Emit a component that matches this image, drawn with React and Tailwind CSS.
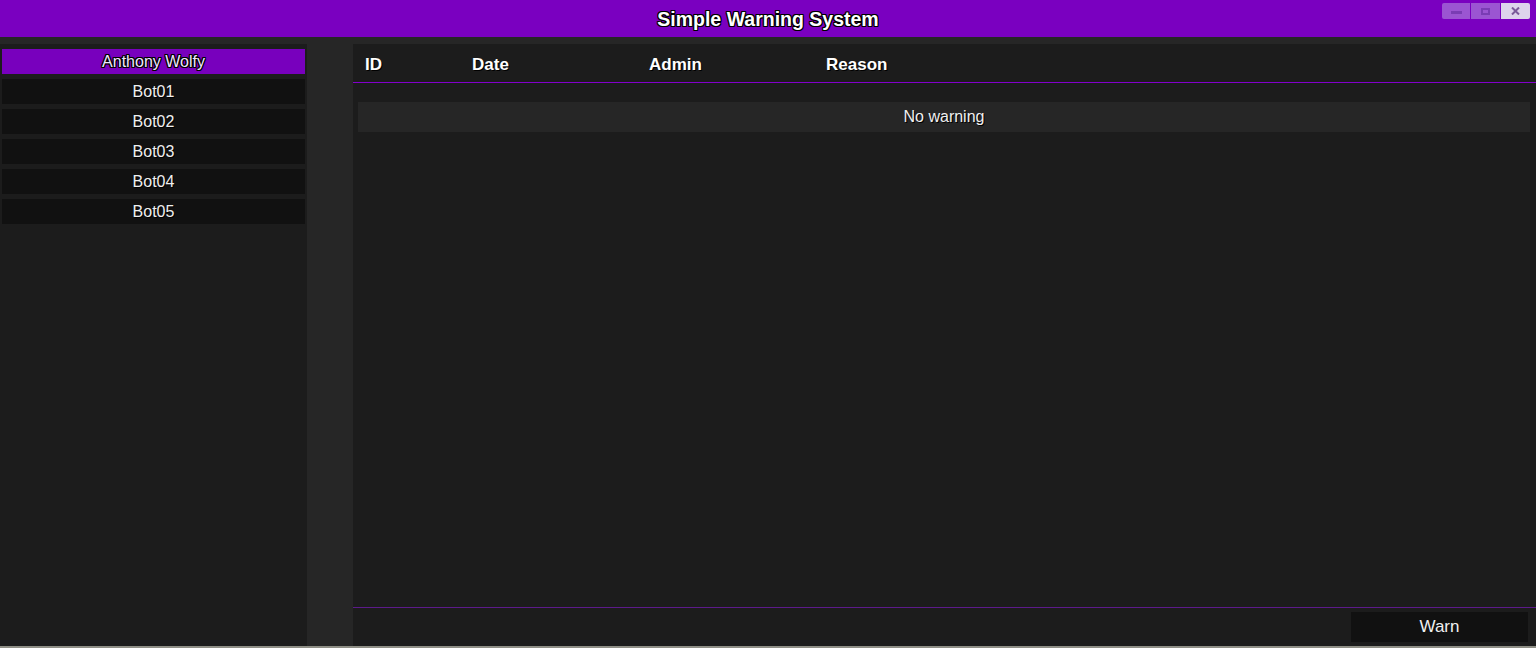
import React from 'react';

const players = ['Anthony Wolfy', 'Bot01', 'Bot02', 'Bot03', 'Bot04', 'Bot05'];

const outline = '[text-shadow:-1px_0_#000,1px_0_#000,0_-1px_#000,0_1px_#000,1px_1px_#000,-1px_-1px_#000,1px_-1px_#000,-1px_1px_#000]';

const App = () => {
  const selected = 0;

  return (
    <div className="w-[1536px] h-[648px] bg-[#262626] flex flex-col overflow-hidden font-['Liberation_Sans',Arial,sans-serif] text-white">
      {/* Barra de título */}
      <div className="relative h-[37px] bg-[#7a00c0] flex items-center justify-center shrink-0">
        <span className={`text-[19.5px] font-bold leading-none mt-[2px] ${outline}`}>Simple Warning System</span>
        <div className="absolute right-[6px] top-[3px] flex gap-px">
          <button className="w-[28px] h-[16px] bg-[#9b55d2] rounded-l-[2px] flex items-center justify-center">
            <span className="block w-[11px] h-[3px] bg-[#7a3cb4] mt-[3px]"></span>
          </button>
          <button className="w-[29px] h-[16px] bg-[#9b55d2] flex items-center justify-center">
            <span className="block w-[9px] h-[7px] border-2 border-[#7a3cb4]"></span>
          </button>
          <button className="w-[29px] h-[16px] bg-[#ddd3ec] rounded-r-[2px] flex items-center justify-center">
            <svg width="9" height="8" viewBox="0 0 9 8">
              <path d="M1 0.5 L8 7.5 M8 0.5 L1 7.5" stroke="#7a5a9a" strokeWidth="2" />
            </svg>
          </button>
        </div>
      </div>

      <div className="flex flex-1 mt-[7px] min-h-0">
        {/* Lista de jogadores */}
        <div className="w-[307px] bg-[#1c1c1c] flex flex-col gap-[5px] pt-[5px] px-[2px] shrink-0">
          {players.map((name, i) => (
            <div
              key={name}
              className={`h-[25px] flex items-center justify-center text-[16px] ${
                i === selected ? `bg-[#7800bd] text-[#f1e6ff] ${outline}` : 'bg-[#111111] text-[#f0f0f0] [text-shadow:1px_1px_#000]'
              }`}
            >
              {name}
            </div>
          ))}
        </div>

        <div className="w-[46px] shrink-0"></div>

        {/* Painel de avisos */}
        <div className="flex-1 bg-[#1c1c1c] flex flex-col">
          <div className="h-[39px] border-b border-[#8300cc] flex items-center pt-[3px] text-[17px] font-bold [text-shadow:1px_1px_#000] shrink-0">
            <span className="pl-[12px] w-[119px]">ID</span>
            <span className="w-[177px]">Date</span>
            <span className="w-[177px]">Admin</span>
            <span>Reason</span>
          </div>
          <div className="flex-1 pt-[19px] pl-[5px] pr-[6px]">
            <div className="h-[30px] bg-[#262626] flex items-center justify-center text-[16px] text-[#f0f0f0] [text-shadow:1px_1px_#000]">
              No warning
            </div>
          </div>
          <div className="h-[39px] border-t border-[#5c1a8a] flex justify-end items-start pt-[4px] pr-[8px] shrink-0">
            <button className="w-[177px] h-[30px] bg-[#111111] text-[17px] text-[#f0f0f0] flex items-center justify-center">
              Warn
            </button>
          </div>
        </div>
      </div>

      <div className="h-[2px] bg-[#8f8f86] shrink-0"></div>
    </div>
  );
};

export default App;
